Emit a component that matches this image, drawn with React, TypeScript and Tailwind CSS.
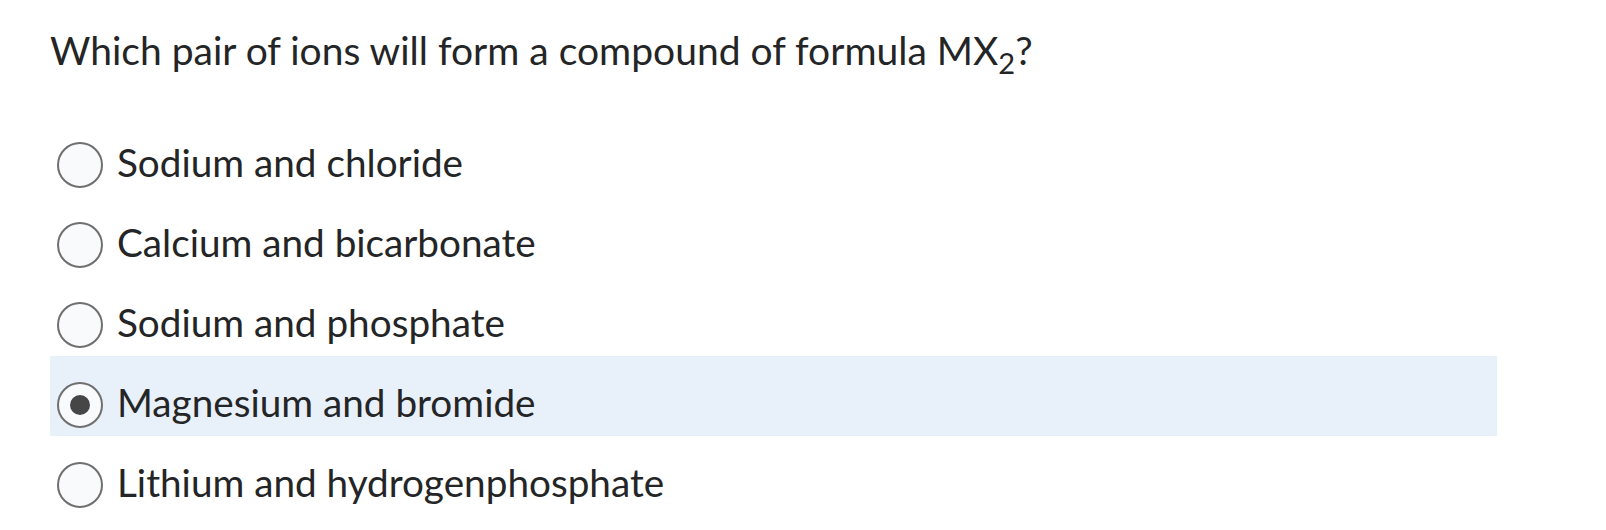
const options = [
  "Sodium and chloride",
  "Calcium and bicarbonate",
  "Sodium and phosphate",
  "Magnesium and bromide",
  "Lithium and hydrogenphosphate",
];

function Radio({ checked }: { checked: boolean }) {
  return (
    <span className="flex h-[46px] w-[46px] shrink-0 items-center justify-center rounded-full border-2 border-[#6f6f6f] bg-[#f9fafc]">
      {checked && <span className="h-[20px] w-[20px] rounded-full bg-[#464646]" />}
    </span>
  );
}

export default function App() {
  const selected = 3;
  return (
    <div className="min-h-[530px] w-[1606px] bg-white pl-[50px] pt-[26px] text-[#242526]" style={{ fontFamily: "Lato, 'Noto Sans', sans-serif" }}>
      <h1 className="text-[39px] leading-[48px] font-normal">
        Which pair of ions will form a compound of formula MX<sub className="text-[29px] relative top-[9px]">2</sub>?
      </h1>
      <div className="mt-[42px] w-[1447px]">
        {options.map((label, i) => (
          <label
            key={label}
            className={
              "flex h-[80px] items-center gap-[14px] pl-[7px] pt-[18px] " +
              (i === selected ? "bg-[#e8f0fa]" : "")
            }
          >
            <Radio checked={i === selected} />
            <span className="mb-[6px] text-[38.7px] leading-[46px]">{label}</span>
          </label>
        ))}
      </div>
    </div>
  );
}
